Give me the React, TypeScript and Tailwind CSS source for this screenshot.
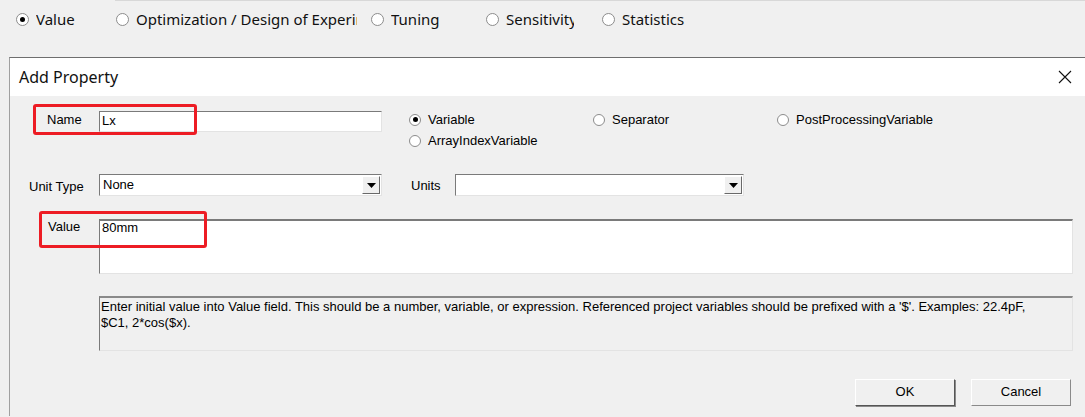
import React from "react";

const ui = { fontFamily: '"Liberation Sans", Arial, sans-serif' };
const top = { fontFamily: '"Noto Sans", "Open Sans", sans-serif' };

function Radio({ checked = false, big = false }: { checked?: boolean; big?: boolean }) {
  return (
    <span
      className={`relative inline-flex shrink-0 items-center justify-center rounded-full border border-[#8c8c8c] bg-white ${
        big ? "h-[13px] w-[13px]" : "h-[12px] w-[12px]"
      }`}
    >
      {checked && <span className="h-[5px] w-[5px] rounded-full bg-black" />}
    </span>
  );
}

function TopRadio({ label, checked, width }: { label: string; checked?: boolean; width: string }) {
  return (
    <div className={`flex items-center gap-[7px] whitespace-nowrap`}>
      <Radio checked={checked} big />
      <span className={`block overflow-hidden text-[15px] text-[#111] ${width}`}>{label}</span>
    </div>
  );
}

function DlgRadio({ label, checked }: { label: string; checked?: boolean }) {
  return (
    <div className="flex h-[21px] items-center gap-[7px] whitespace-nowrap text-[13px]">
      <Radio checked={checked} />
      <span>{label}</span>
    </div>
  );
}

function Sunken({ className = "", children }: { className?: string; children?: React.ReactNode }) {
  return (
    <div
      className={`border border-t-[#7a7a7a] border-l-[#7a7a7a] border-r-[#e3e3e3] border-b-[#e3e3e3] ${className}`}
    >
      {children}
    </div>
  );
}

function Select({ width, value }: { width: string; value?: string }) {
  return (
    <Sunken className={`flex h-[22px] items-stretch bg-white ${width}`}>
      <div className="flex-1 pl-[3px] text-[13px] leading-[19px]">{value}</div>
      <div className="m-[1px] flex w-[18px] items-center justify-center border border-t-white border-l-white border-r-[#696969] border-b-[#696969] bg-[#f0f0f0]">
        <svg width="9" height="5" viewBox="0 0 9 5">
          <path d="M0 0h9L4.5 5z" fill="#000" />
        </svg>
      </div>
    </Sunken>
  );
}

function Button({ label, isDefault }: { label: string; isDefault?: boolean }) {
  return (
    <div
      className={`flex h-[27px] w-[100px] items-center justify-center border bg-[#f0f0f0] text-[13px] border-t-white border-l-white ${
        isDefault ? "border-r-[#555] border-b-[#555] shadow-[1px_1px_0_#8a8a8a]" : "border-r-[#8a8a8a] border-b-[#8a8a8a]"
      }`}
    >
      {label}
    </div>
  );
}

export default function App() {
  return (
    <div className="h-[417px] w-[1085px] overflow-hidden bg-[#f0f0f0]" style={ui}>
      {/* tab strip of the window behind */}
      <div className="relative h-[57px]" style={top}>
        <div className="absolute left-[115px] right-0 top-0 h-px bg-[#d8d8d8]" />
        <div className="flex items-center pl-[16px] pt-[8px]">
          <TopRadio label="Value" checked width="w-[80px]" />
          <TopRadio label="Optimization / Design of Experiments" width="w-[221px]" />
          <div className="w-[14px]" />
          <TopRadio label="Tuning" width="w-[95px]" />
          <TopRadio label="Sensitivity Analysis" width="w-[68px]" />
          <div className="w-[28px]" />
          <TopRadio label="Statistics" width="w-[100px]" />
        </div>
      </div>

      {/* dialog */}
      <div className="relative ml-[9px] w-[1076px] border-l border-t border-l-[#a0a0a0] border-t-[#6e6e6e]">
        <div className="flex h-[38px] items-center justify-between bg-white pl-[9px] pr-[13px]" style={top}>
          <span className="text-[16px] text-[#111]">Add Property</span>
          <svg width="14" height="14" viewBox="0 0 14 14">
            <path d="M1 1l12 12M13 1L1 13" stroke="#111" strokeWidth="1.1" />
          </svg>
        </div>

        <div className="pb-[10px] text-black">
          {/* name + kind */}
          <div className="flex items-start pt-[15px]">
            <div className="ml-[29px] w-[60px] pl-[8px] text-[13px] leading-[17px]">Name</div>
            <Sunken className="h-[21px] w-[283px] bg-white pl-[2px] text-[13px] leading-[18px]">Lx</Sunken>
            <div className="ml-[27px] mt-[-2px] grid grid-cols-[184px_184px_auto]">
              <DlgRadio label="Variable" checked />
              <DlgRadio label="Separator" />
              <DlgRadio label="PostProcessingVariable" />
              <DlgRadio label="ArrayIndexVariable" />
            </div>
          </div>

          {/* unit type + units */}
          <div className="mt-[23px] flex items-center">
            <div className="ml-[19px] w-[70px] pt-[3px] text-[13px]">Unit Type</div>
            <Select width="w-[283px]" value="None" />
            <div className="ml-[29px] w-[44px] text-[13px]">Units</div>
            <Select width="w-[289px]" />
          </div>

          {/* value */}
          <div className="mt-[22px] flex items-start">
            <div className="ml-[38px] mt-[-2px] w-[51px] text-[13px]">Value</div>
            <Sunken className="h-[55px] w-[974px] border-t-2 border-t-[#6a6a6a] bg-white pl-[2px] text-[13px] leading-[14px]">
              80mm
            </Sunken>
          </div>

          {/* help text */}
          <div className="mt-[22px] flex">
            <Sunken className="ml-[89px] h-[55px] w-[974px] border-t-2 border-t-[#8a8a8a] pl-[1px] pt-[1px] text-[13px] leading-[16px] whitespace-nowrap">
              Enter initial value into Value field. This should be a number, variable, or expression. Referenced project
              variables should be prefixed with a '$'. Examples: 22.4pF,
              <br />
              $C1, 2*cos($x).
            </Sunken>
          </div>

          {/* buttons */}
          <div className="mt-[28px] flex justify-end gap-[16px] pr-[14px]">
            <Button label="OK" isDefault />
            <Button label="Cancel" />
          </div>
        </div>

        {/* red annotation boxes */}
        <div className="absolute left-[23px] top-[46px] h-[31px] w-[164px] rounded-[3px] border-[3px] border-[#ed1c24]" />
        <div className="absolute left-[29px] top-[153px] h-[37px] w-[168px] rounded-[3px] border-[3px] border-[#ed1c24]" />
      </div>
    </div>
  );
}
